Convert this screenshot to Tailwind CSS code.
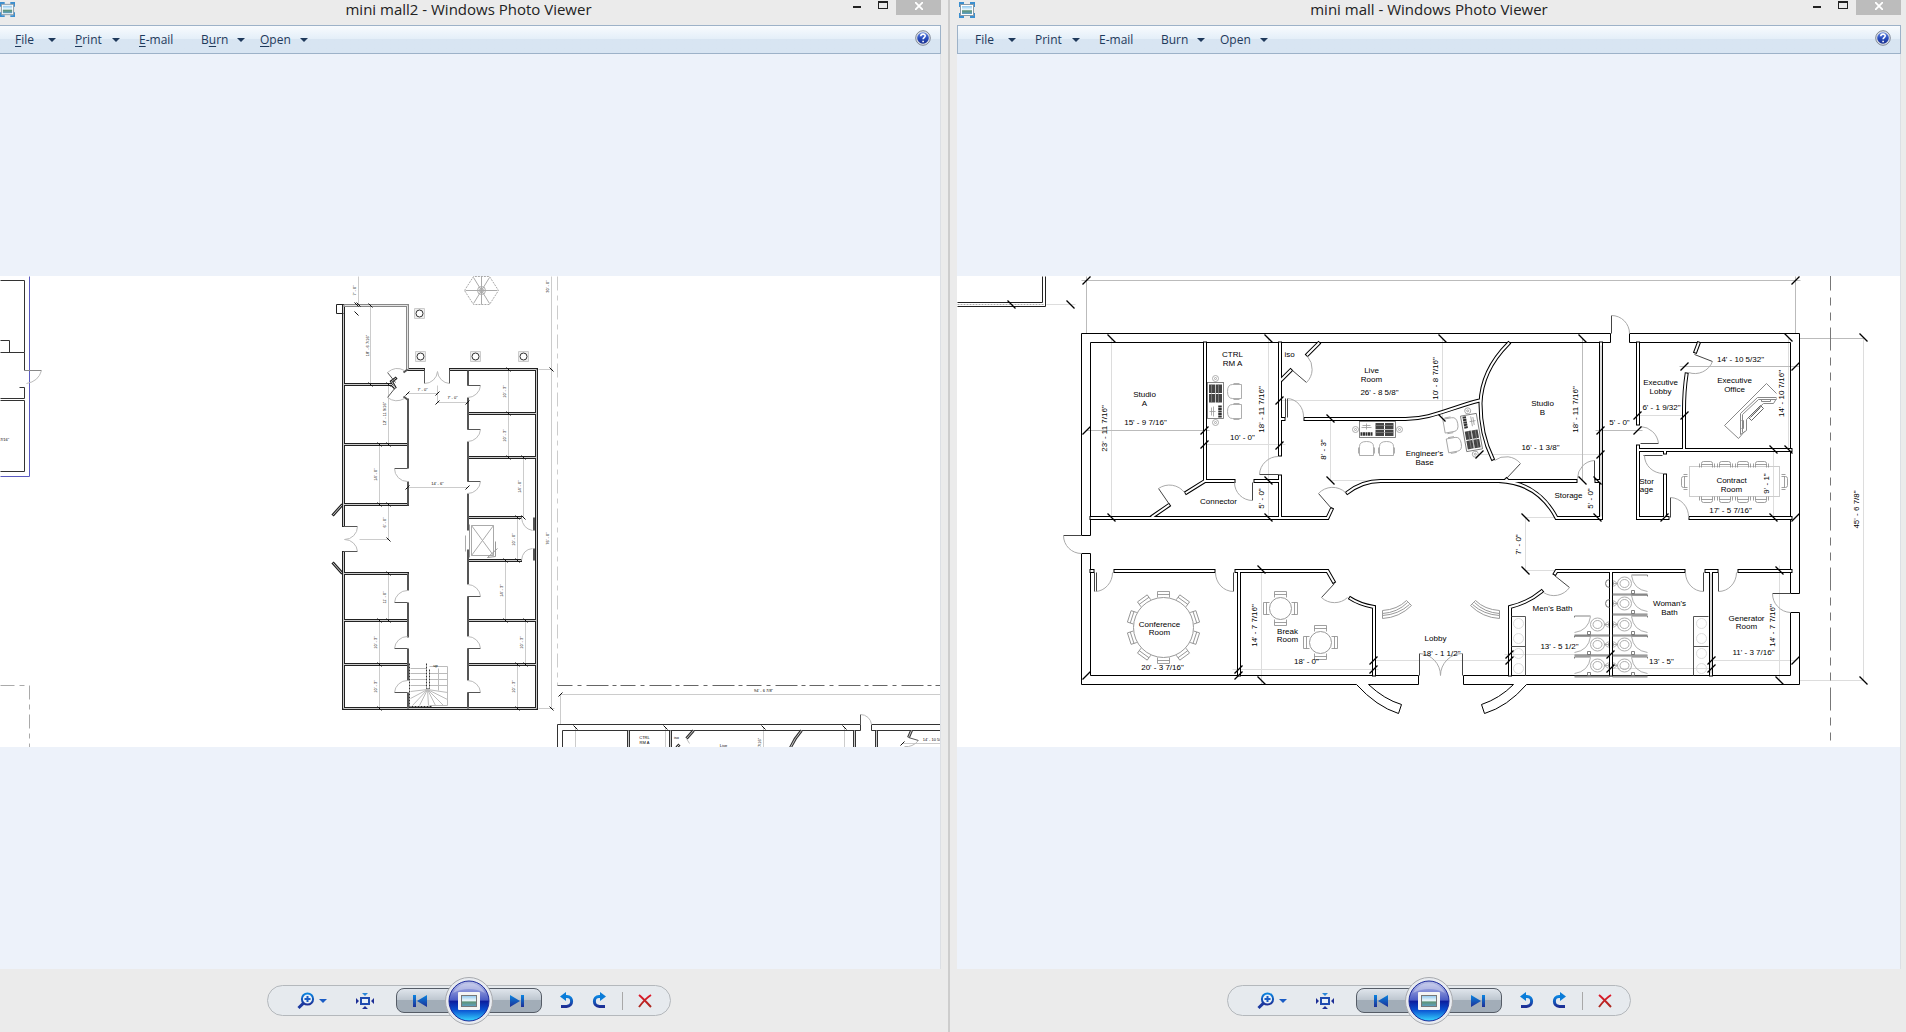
<!DOCTYPE html>
<html lang="en">
<head>
  <meta charset="UTF-8">
  <title>Windows Photo Viewer</title>
  <script src="https://cdn.jsdelivr.net/npm/@tailwindcss/browser@4"></script>
</head>
<body class="bg-[#ebebeb] text-[#1e395b] font-['Open_Sans','Noto_Sans',sans-serif]">

  <!-- shared icons and furniture -->
  <svg class="absolute w-0 h-0" aria-hidden="true">
    <defs>
      <linearGradient id="sky" x1="0" y1="0" x2="0" y2="1">
        <stop offset="0" stop-color="#8cc6ee"/><stop offset=".45" stop-color="#eaf6fb"/>
        <stop offset=".6" stop-color="#5f9478"/><stop offset="1" stop-color="#5fa0c8"/>
      </linearGradient>
      <linearGradient id="blue" x1="0" y1="0" x2="0" y2="1">
        <stop offset="0" stop-color="#0a84e0"/><stop offset="1" stop-color="#1d2f96"/>
      </linearGradient>
      <linearGradient id="red" x1="0" y1="0" x2="0" y2="1">
        <stop offset="0" stop-color="#e0182a"/><stop offset="1" stop-color="#a82a20"/>
      </linearGradient>
      <linearGradient id="ball" x1="0" y1="0" x2="0" y2="1">
        <stop offset="0" stop-color="#b9bfe6"/><stop offset=".2" stop-color="#8f99da"/><stop offset=".48" stop-color="#4a5bc4"/>
        <stop offset=".5" stop-color="#0c1c9c"/><stop offset=".72" stop-color="#0a4fd0"/><stop offset="1" stop-color="#35d6ff"/>
      </linearGradient>
      <linearGradient id="help" x1="0" y1="0" x2="0" y2="1">
        <stop offset="0" stop-color="#6f8fe0"/><stop offset=".5" stop-color="#2a4fc0"/><stop offset="1" stop-color="#1a2f8c"/>
      </linearGradient>
    </defs>

    <symbol id="i-app" viewBox="0 0 16 16">
      <path d="M1 5V1H5M11 1H15V5M15 11V15H11M5 15H1V11" fill="none" stroke="#3b8fd0" stroke-width="2"/>
      <rect x="1.500" y="2.500" width="13" height="11" fill="#fff" stroke="#8a9aa6"/>
      <rect x="3" y="4" width="10" height="8" fill="url(#sky)"/>
    </symbol>
    <symbol id="i-help" viewBox="0 0 16 16">
      <circle cx="8" cy="8" r="7.300" fill="#dfe3ea" stroke="#7f8794"/>
      <circle cx="8" cy="8" r="5.800" fill="url(#help)"/>
      <path d="M5.800 6.300C5.800 3.400 10.400 3.500 10.200 6C10.100 7.600 8.200 7.700 8.100 9.300M8.100 10.700V12.200" fill="none" stroke="#fff" stroke-width="1.600"/>
    </symbol>
    <symbol id="i-zoom" viewBox="0 0 18 18">
      <circle cx="10.500" cy="7" r="5.600" fill="#e8f1f8" stroke="url(#blue)" stroke-width="2"/>
      <path d="M6.500 11.200L1.500 16" stroke="#1d3aa0" stroke-width="3"/>
      <path d="M10.500 4V10M7.500 7H13.500" stroke="#1a5cc4" stroke-width="2"/>
    </symbol>
    <symbol id="i-fit" viewBox="0 0 18 16">
      <rect x="5" y="5" width="8" height="6" fill="#e8f1f8" stroke="#1f4bb0" stroke-width="2"/>
      <path d="M6 0H12L9 3Z" fill="#2a86d8"/>
      <path d="M6 16H12L9 13ZM0 5V11L3 8ZM18 5V11L15 8Z" fill="#1d2f96"/>
    </symbol>
    <symbol id="i-prev" viewBox="0 0 14 12">
      <path d="M0 0H3V12H0ZM14 0V12L4 6Z" fill="url(#blue)"/>
    </symbol>
    <symbol id="i-undo" viewBox="0 0 14 17">
      <path d="M4 4.500H7C13 4.500 13.500 14 6.500 14.500H1" fill="none" stroke="url(#blue)" stroke-width="3"/>
      <path d="M0 4.500L6 0V9Z" fill="#0a7cd8"/>
    </symbol>
    <symbol id="i-del" viewBox="0 0 14 14">
      <path d="M1 1C5 4 9 9 13 13M13 1C8 4 4 9 1 13" fill="none" stroke="url(#red)" stroke-width="2"/>
    </symbol>

    <symbol id="console" viewBox="-26 -10 52 40" overflow="visible">
      <g fill="#fff" stroke="#999" stroke-width=".8">
        <rect x="-18" y="-8" width="36" height="16" stroke="#666"/>
        <circle cx="-22" cy="0" r="3"/><circle cx="-22" cy="0" r="1"/>
        <circle cx="22" cy="0" r="3"/><circle cx="22" cy="0" r="1"/>
        <path d="M-16 -2H-6M-15 -4H-7M-11 -6V0"/>
        <path d="M-18 26V17Q-18 12 -11 12Q-4 12 -4 17V26H-18ZM-19 18V24M-3 18V24"/>
        <path d="M2 26V17Q2 12 9 12Q16 12 16 17V26H2ZM1 18V24M17 18V24"/>
      </g>
      <path d="M-17 4.500H-5" stroke="#333" stroke-width="3.500" stroke-dasharray="2 .5"/>
      <path d="M-2 -3.500H16M-2 3.500H16" stroke="#444" stroke-width="6" stroke-dasharray="8.500 1"/>
      <path d="M-2 -4H16M-2 0H16M-2 3H16" stroke="#999" stroke-width=".6"/>
    </symbol>
    <symbol id="wc" viewBox="0 0 37 21" overflow="visible">
      <g fill="none" stroke="#999" stroke-width=".8">
        <ellipse cx="12" cy="10" rx="7" ry="6.500"/><ellipse cx="12" cy="10" rx="4.500" ry="4"/>
        <path d="M1 7L5 10L1 13M1 10H5M1 8V12"/>
        <path d="M19 2Q21 16 35 18"/>
        <path d="M0 20.500H35M0 21.500H35M19 1.500H35V3M19 17H22V20H19Z" stroke="#666"/>
      </g>
    </symbol>
    <symbol id="chair" viewBox="0 0 12 7" overflow="visible">
      <path d="M0 6V0H12V6M0 3H12" fill="none" stroke="#888" stroke-width=".8"/>
    </symbol>
    <symbol id="seat" viewBox="0 0 15 6" overflow="visible">
      <path d="M2 6V2Q2 0 4 0H11Q13 0 13 2V6M0 2V6M15 2V6M2 3H13" fill="none" stroke="#888" stroke-width=".8"/>
    </symbol>
  </svg>

  <div class="grid grid-cols-[950fr_956fr] min-h-screen">

    <!-- mini mall2 -->
    <section class="flex flex-col pr-[7px] border-r-2 border-[#cdcdcd] min-w-0">
      <header class="relative flex justify-center h-[25px] text-[#222]">
        <svg class="absolute left-0 top-0.5 w-[15px] h-[15px]"><use href="#i-app"/></svg>
        <h1 class="text-[15px] leading-[18px] pr-1 whitespace-nowrap">mini mall2 - Windows Photo Viewer</h1>
        <div class="absolute right-0 top-0 flex h-[15px]">
          <button aria-label="Minimize" class="flex items-start w-6 pl-[9px] pt-1.5"><span class="h-0.5 w-2 bg-[#222]"></span></button>
          <button aria-label="Maximize" class="flex items-start w-7 pl-[10px] pt-px"><span class="h-2 w-[10px] border border-t-2 border-[#222]"></span></button>
          <button aria-label="Close" class="w-[45px] bg-[#bcbcbc] flex justify-center pt-0.5">
            <svg class="w-2 h-2" viewBox="0 0 8 8"><path d="M0 0L8 8M8 0L0 8" stroke="#fff" stroke-width="1.800"/></svg>
          </button>
        </div>
      </header>
      <nav class="flex items-center h-[29px] pl-[15px] pr-[9px] text-xs border border-l-0 border-[#9db2c8] bg-linear-to-b from-[#f8fbfe] from-0% via-[#e3eef8] via-50% to-[#d8e5f2] to-50%">
        <button class="flex items-center justify-between w-[41px]"><span><u class="underline-offset-2">F</u>ile</span><span class="size-0 border-x-4 border-t-4 border-x-transparent border-t-[#1e395b]"></span></button>
        <button class="flex items-center justify-between w-[45px] ml-[19px]"><span><u class="underline-offset-2">P</u>rint</span><span class="size-0 border-x-4 border-t-4 border-x-transparent border-t-[#1e395b]"></span></button>
        <button class="w-11 ml-[19px] text-left whitespace-nowrap"><u class="underline-offset-2">E</u>-mail</button>
        <button class="flex items-center justify-between w-11 ml-[18px]"><span>B<u class="underline-offset-2">u</u>rn</span><span class="size-0 border-x-4 border-t-4 border-x-transparent border-t-[#1e395b]"></span></button>
        <button class="flex items-center justify-between w-12 ml-[15px]"><span><u class="underline-offset-2">O</u>pen</span><span class="size-0 border-x-4 border-t-4 border-x-transparent border-t-[#1e395b]"></span></button>
        <button aria-label="Help" class="ml-auto pb-1"><svg class="size-4"><use href="#i-help"/></svg></button>
      </nav>
      <main class="flex-1 flex flex-col justify-center bg-[#edf2fa] border-r border-[#dcdfe4]">
        <svg class="w-full h-[471px] bg-white font-['Liberation_Sans',sans-serif]" viewBox="-0.500 275.500 940 471" role="img" aria-label="mini mall2 floor plan">
          <!-- dimension lines -->
          <g fill="none" stroke="#ccc">
            <path d="M370 305V384M388 384V444M379 444V505M407 393H437M437 385V402M437 402H467M508 369V457M523 457V517M407 487H467M359 539H388M388 504V539M388 573V620M379 620V708M517 517V560M505 560V620M525 620V664M517 664V708M551 276V708M538 369H552M538 708H554M358 276V305"/>
            <path d="M560 694H941M560 694V724M575 727V747M665 727V747M763 727V747M844 727V747M902 743H941"/>
          </g>
          <path d="M557 276V685" stroke="#ccc" fill="none" stroke-dasharray="14 5 5 5"/>
          <path d="M557 685H941" stroke="#666" fill="none" stroke-dasharray="15 5 4 5 22 4 4 4"/>
          <path d="M0 685H29V747" stroke="#aaa" fill="none" stroke-dasharray="14 5 5 5"/>

          <!-- neighbouring block at the left edge -->
          <path d="M29 276V476H0" stroke="#5a5ac0" fill="none"/>
          <path d="M0 280H24V352H0M24 387V398H0M0 400H24V471H0M9 340V352M24 352V370M0 340H9M19 387H24" stroke="#333" fill="none"/>
          <path d="M24 370H41" stroke="#888" fill="none"/>
          <path d="M41 370Q38 381 26 383" stroke="#bbb" fill="none"/>

          <!-- walls -->
          <g fill="none" stroke="#222" stroke-width="3" stroke-linecap="square">
            <path d="M343 305V525M343 552V708H536V369H450M423 369H408M344 384H391M344 444H406M344 504H407M344 573H407M344 620H406M344 664H406M468 413H535M468 457H535M468 517H520M468 560H520M468 620H535M468 664H535M341 505L333 514M341 572L333 563M391 384L395 388L391 381L395 378"/>
            <path d="M343 305V525M343 552V708H536V369H450M423 369H408M344 384H391M344 444H406M344 504H407M344 573H407M344 620H406M344 664H406M468 413H535M468 457H535M468 517H520M468 560H520M468 620H535M468 664H535M341 505L333 514M341 572L333 563M391 384L395 388L391 381L395 378" stroke="#ccc" stroke-width="1"/>
          </g>
          <path d="M343 305H407V369" stroke="#888" stroke-width="3" fill="none"/>
          <path d="M344 305H407V369" stroke="#e4e4e4" stroke-width="1" fill="none"/>
          <path d="M343 304H336V313H343" stroke="#222" fill="none"/>
          <g fill="none" stroke="#555" stroke-width="2">
            <path d="M407.500 398V468M407.500 481V505M407.500 573V590M407.500 602V637M407.500 648V680M407.500 692V708M403 372L407 369M403 396L407 399"/>
            <path d="M467.500 370V385M467.500 397V429M467.500 441V481M467.500 493V530M467.500 549V584M467.500 596V636M467.500 648V680M467.500 692V708M533.500 517V530M533.500 548V560"/>
          </g>

          <!-- doors -->
          <path d="M394 468H407M394 602H407M394 648H407M394 692H407M467 385H480M467 429H480M467 481H480M467 596H480M467 648H480M467 692H480M343 526H357M343 551H357M424 369V383M449 369V383M395 382L387 372M395 387L387 397" stroke="#555" fill="none"/>
          <g fill="none" stroke="#bbb">
            <path d="M394 468A13 13 0 0 0 407 481M394 602A13 13 0 0 1 407 590M394 648A13 13 0 0 1 407 636M394 692A13 13 0 0 1 407 680"/>
            <path d="M480 385A13 13 0 0 1 467 397M480 429A13 13 0 0 1 467 441M480 481A13 13 0 0 1 467 493M480 596A13 13 0 0 0 467 584M480 648A13 13 0 0 0 467 636M480 692A13 13 0 0 0 467 680"/>
            <path d="M357 526A13 13 0 0 1 344 539A13 13 0 0 1 357 551M424 383A13 13 0 0 0 437 371A13 13 0 0 0 449 383M387 372Q395 365 404 370M387 397Q395 403 404 398M521 517Q522 528 532 530M521 560Q522 549 532 548"/>
          </g>

          <!-- umbrella table and columns -->
          <g fill="none" stroke="#aaa">
            <path d="M464 290L473 276H489L498 290L489 304H473Z" stroke-dasharray="2 1"/>
            <path d="M465 290H497M473 277L489 303M489 277L473 303M481 276V304"/>
            <circle cx="481" cy="290" r="4"/><circle cx="481" cy="290" r="2"/>
          </g>
          <path d="M414 308H424V318H414ZM415 351H425V361H415ZM470 351H480V361H470ZM518 351H528V361H518Z" fill="#eee" stroke="#ccc"/>
          <g fill="#fff" stroke="#333">
            <circle cx="419" cy="313" r="3.500"/><circle cx="420" cy="356" r="3.500"/><circle cx="475" cy="356" r="3.500"/><circle cx="523" cy="356" r="3.500"/>
          </g>

          <!-- lift and stairs -->
          <path d="M471 525H493V555H471ZM471 525L493 555M493 525L471 555M465 535V551" fill="none" stroke="#aaa"/>
          <path d="M469 524V557M495 541V556L487 557L497 548" fill="none" stroke="#999"/>
          <path d="M429 666H447V705H429M429 673H447M429 679H447M429 685H447M438 668V690M427 689L447 692M427 689L447 699M427 689L443 705M427 689L435 705M427 689L428 705M427 689L419 705M427 689L412 705M427 689L410 698M427 689L410 691M410 685H426M410 679H426M410 673H426M410 668H426" fill="none" stroke="#bbb"/>
          <path d="M409 663V706H431M426 663V688H429V668" fill="none" stroke="#333" stroke-dasharray="2 1"/>

          <!-- block at the bottom -->
          <path d="M557 747V724H860V730H562V747M941 724H871V730H941" fill="none" stroke="#333"/>
          <g fill="none" stroke="#333" stroke-width="3">
            <path d="M628 730V747M670 730V747M854 730V747M876 730V747M693 730L686 738M679 744L676 747M801 730Q794 738 790 747M911 730L908 737"/>
            <path d="M628 730V747M670 730V747M854 730V747M876 730V747M693 730L686 738M679 744L676 747M801 730Q794 738 790 747M911 730L908 737" stroke="#ccc" stroke-width="1"/>
          </g>
          <path d="M860 714V724M908 737L918 740" stroke="#555" fill="none"/>
          <path d="M860 714A11 11 0 0 1 871 724M686 738L689 743M918 740Q912 747 904 746" stroke="#bbb" fill="none"/>

          <!-- ticks -->
          <path d="M368 303l4 4M354 302l4 4M356 302l4 4M354 311l4 4M368 382l4 4M386 382l4 4M377 442l4 4M386 442l4 4M377 502l4 4M386 502l4 4M386 537l4 4M386 571l4 4M386 618l4 4M377 618l4 4M377 662l4 4M377 706l4 4M506 367l4 4M506 411l4 4M506 455l4 4M521 455l4 4M521 515l4 4M515 515l4 4M515 558l4 4M503 558l4 4M503 618l4 4M523 618l4 4M523 662l4 4M515 662l4 4M515 706l4 4M549 367l4 4M549 706l4 4M405 395l4-4M435 395l4-4M435 404l4-4M465 404l4-4M405 489l4-4M465 489l4-4M558 696l4-4M573 725l4 4M663 725l4 4M761 725l4 4M842 725l4 4M900 745l4-4" stroke="#111" fill="none"/>

          <g font-size="4" text-anchor="middle" fill="#000">
            <text x="422" y="390">7' - 0"</text>
            <text x="452" y="398">7' - 0"</text>
            <text x="437" y="484">14' - 6"</text>
            <text x="763" y="691">94' - 6 7/8"</text>
            <text x="644" y="738">CTRL</text>
            <text x="644" y="743">RM A</text>
            <text x="676" y="738">iso</text>
            <text x="723" y="746">Live</text>
            <text x="934" y="740">14' - 10 5/32"</text>
            <text x="435" y="666">up</text>
            <text x="4" y="440">7/16"</text>
            <text transform="translate(355 290) rotate(-90)">7' - 0"</text>
            <text transform="translate(548 286) rotate(-90)">30' - 0"</text>
            <text transform="translate(548 538) rotate(-90)">76' - 0"</text>
            <text transform="translate(368 345) rotate(-90)">18' - 6 7/16"</text>
            <text transform="translate(385 413) rotate(-90)">12' - 11 9/16"</text>
            <text transform="translate(376 474) rotate(-90)">14' - 0"</text>
            <text transform="translate(385 522) rotate(-90)">6' - 0"</text>
            <text transform="translate(385 597) rotate(-90)">11' - 0"</text>
            <text transform="translate(376 642) rotate(-90)">10' - 3"</text>
            <text transform="translate(376 686) rotate(-90)">10' - 3"</text>
            <text transform="translate(505 391) rotate(-90)">10' - 3"</text>
            <text transform="translate(505 435) rotate(-90)">10' - 3"</text>
            <text transform="translate(520 486) rotate(-90)">14' - 0"</text>
            <text transform="translate(514 539) rotate(-90)">10' - 0"</text>
            <text transform="translate(502 590) rotate(-90)">14' - 3"</text>
            <text transform="translate(522 642) rotate(-90)">10' - 3"</text>
            <text transform="translate(514 686) rotate(-90)">10' - 3"</text>
            <text transform="translate(760 742) rotate(-90)">7/16"</text>
          </g>
        </svg>
      </main>
      <footer class="flex items-center justify-center h-[63px] pr-1">
        <div class="relative flex items-center w-[404px] h-[31px] rounded-full border border-[#b4b8bc] bg-[#e6eaee]">
          <button aria-label="Change the display size" class="flex items-center gap-1 ml-[29px]"><svg class="size-[18px]"><use href="#i-zoom"/></svg><span class="size-0 border-x-4 border-t-4 border-x-transparent border-t-[#1a5cc4]"></span></button>
          <button aria-label="Actual size" class="ml-[29px]"><svg class="w-[18px] h-4"><use href="#i-fit"/></svg></button>
          <button aria-label="Previous" class="flex items-center justify-center w-[73px] h-[25px] pr-6 ml-[22px] rounded-l-lg border border-[#555c66] bg-linear-to-b from-[#dfe5ec] from-0% via-[#bcc5ce] via-50% to-[#a2adb8] to-50%"><svg class="w-3.5 h-3"><use href="#i-prev"/></svg></button>
          <button aria-label="Next" class="flex items-center justify-center w-[73px] h-[25px] pl-6 rounded-r-lg border border-[#555c66] bg-linear-to-b from-[#dfe5ec] from-0% via-[#bcc5ce] via-50% to-[#a2adb8] to-50%"><svg class="w-3.5 h-3 -scale-x-100"><use href="#i-prev"/></svg></button>
          <button aria-label="Rotate counterclockwise" class="ml-[18px]"><svg class="w-3.5 h-[17px]"><use href="#i-undo"/></svg></button>
          <button aria-label="Rotate clockwise" class="ml-[18px]"><svg class="w-3.5 h-[17px] -scale-x-100"><use href="#i-undo"/></svg></button>
          <span class="w-px h-[18px] ml-4 bg-[#a8a8a8]"></span>
          <button aria-label="Delete" class="ml-[15px]"><svg class="size-3.5"><use href="#i-del"/></svg></button>
          <button aria-label="Play slide show" class="absolute left-1/2 top-1/2 -translate-1/2">
            <svg class="size-12" viewBox="0 0 48 48">
              <circle cx="24" cy="24" r="23.500" fill="#e8ebf0" stroke="#a8aaae"/>
              <circle cx="24" cy="24" r="20" fill="url(#ball)" stroke="#1c2a9c"/>
              <path d="M8 16A18 18 0 0 1 40 16Q24 8 8 16Z" fill="#fff" fill-opacity=".3"/>
              <rect x="13" y="15" width="22" height="18" rx="1" fill="#f4f4f4"/>
              <rect x="16.500" y="18.500" width="15" height="11" fill="url(#sky)" stroke="#777"/>
            </svg>
          </button>
        </div>
      </footer>
    </section>

    <!-- mini mall -->
    <section class="flex flex-col pl-[7px] pr-[5px] min-w-0">
      <header class="relative flex justify-center h-[25px] text-[#222]">
        <svg class="absolute left-0.5 top-0.5 size-4"><use href="#i-app"/></svg>
        <h1 class="text-[15px] leading-[18px] whitespace-nowrap">mini mall - Windows Photo Viewer</h1>
        <div class="absolute right-0 top-0 flex h-[15px]">
          <button aria-label="Minimize" class="flex items-start w-6 pl-[9px] pt-1.5"><span class="h-0.5 w-2 bg-[#222]"></span></button>
          <button aria-label="Maximize" class="flex items-start w-7 pl-[10px] pt-px"><span class="h-2 w-[10px] border border-t-2 border-[#222]"></span></button>
          <button aria-label="Close" class="w-[45px] bg-[#bcbcbc] flex justify-center pt-0.5">
            <svg class="w-2 h-2" viewBox="0 0 8 8"><path d="M0 0L8 8M8 0L0 8" stroke="#fff" stroke-width="1.800"/></svg>
          </button>
        </div>
      </header>
      <nav class="flex items-center h-[29px] pl-[17px] pr-[9px] text-xs border border-[#9db2c8] bg-linear-to-b from-[#f8fbfe] from-0% via-[#e3eef8] via-50% to-[#d8e5f2] to-50%">
        <button class="flex items-center justify-between w-[41px]">File<span class="size-0 border-x-4 border-t-4 border-x-transparent border-t-[#1e395b]"></span></button>
        <button class="flex items-center justify-between w-[45px] ml-[19px]">Print<span class="size-0 border-x-4 border-t-4 border-x-transparent border-t-[#1e395b]"></span></button>
        <button class="w-11 ml-[19px] text-left whitespace-nowrap">E-mail</button>
        <button class="flex items-center justify-between w-11 ml-[18px]">Burn<span class="size-0 border-x-4 border-t-4 border-x-transparent border-t-[#1e395b]"></span></button>
        <button class="flex items-center justify-between w-12 ml-[15px]">Open<span class="size-0 border-x-4 border-t-4 border-x-transparent border-t-[#1e395b]"></span></button>
        <button aria-label="Help" class="ml-auto pb-1"><svg class="size-4"><use href="#i-help"/></svg></button>
      </nav>
      <main class="flex-1 flex flex-col justify-center bg-[#edf2fa] border-r border-[#dcdfe4]">
        <svg class="w-full h-[471px] bg-white font-['Liberation_Sans',sans-serif]" viewBox="956.500 275.500 943 471" role="img" aria-label="mini mall floor plan">
          <!-- dimension lines -->
          <g fill="none" stroke="#ddd">
            <path d="M1111 338V517M1268 338V517M1204 444H1285M1442 338V418M1279 400H1479M1330 418V480H1380M1480 454H1600M1637 415H1684M1788 338V449M1863 337V680H1799M1261 569V684M1232 669H1378M1373 660H1509M1504 654H1610M1610 668H1711M1711 660H1795M1779 565V680M1525 517V570M1525 517H1555M1525 570H1555M1773 449V517M1046 304H1075"/>
            <path d="M1086 276V333M1081 280H1800M1795 276V333M1086 430H1209M1582 338V480M1595 430H1642M1679 366H1799M1799 338H1863" stroke="#bbb"/>
          </g>
          <path d="M1830 267V743" fill="none" stroke="#777" stroke-dasharray="23 7 8 7 8 7"/>

          <!-- neighbouring block -->
          <path d="M957 302H1042V276M957 306H1045V276" fill="none" stroke="#222"/>
          <path d="M957 304H1043" fill="none" stroke="#aaa" stroke-dasharray="2 1"/>

          <!-- outer walls -->
          <g fill="none" stroke="#000">
            <path d="M1090 535H1081V333H1610V342H1090V535M1629 333H1799V593H1790V342H1629ZM1081 553H1090V675H1418V684H1368M1356 684H1081V553M1799 612V684H1526M1513 684H1463V675H1790V612H1799"/>
            <path d="M1356 684Q1376 706 1398 713L1401 704Q1384 699 1368 684M1526 684Q1507 706 1484 713L1481 704Q1499 698 1513 684"/>
          </g>

          <!-- inner walls -->
          <g fill="none" stroke="#000" stroke-width="4" stroke-linecap="square">
            <path d="M1204.500 343V480.500H1233M1255 480.500H1278M1279.500 343V454M1279.500 476V517M1204.500 480.500L1186 492M1168 505L1152 516M1091 517.500H1327L1331 509M1318 343L1307 354M1290 370L1281 379M1281 418.500H1283M1305 418.500H1405C1430 418.500 1448 408 1479 400M1508 343Q1481 370 1480 403Q1480 434 1492 458M1347 492Q1362 480.500 1380 480.500H1575M1500 480.500C1530 482 1547 500 1556 517.500H1600M1506 479L1507 480M1600.500 343V517.500M1596 480.500H1600M1637.500 343V423M1637.500 446V517.500H1667M1638 449.500H1790M1690 517.500H1790M1664.500 450V452M1664.500 475V517M1698 343L1695 351M1686 374Q1683.500 390 1683.500 410V449
              M1091 570.500H1092M1115 570.500H1213M1236 570.500H1327L1333 581M1238.500 571V674M1350 598Q1359 604 1373.500 606.500V674M1509.500 674V606.500Q1528 602 1541 591M1554.500 573L1556 570.500H1683M1706 570.500H1716M1739 570.500H1790M1610.500 571V674M1710.500 571V674"/>
            <path d="M1204.500 343V480.500H1233M1255 480.500H1278M1279.500 343V454M1279.500 476V517M1204.500 480.500L1186 492M1168 505L1152 516M1091 517.500H1327L1331 509M1318 343L1307 354M1290 370L1281 379M1281 418.500H1283M1305 418.500H1405C1430 418.500 1448 408 1479 400M1508 343Q1481 370 1480 403Q1480 434 1492 458M1347 492Q1362 480.500 1380 480.500H1575M1500 480.500C1530 482 1547 500 1556 517.500H1600M1506 479L1507 480M1600.500 343V517.500M1596 480.500H1600M1637.500 343V423M1637.500 446V517.500H1667M1638 449.500H1790M1690 517.500H1790M1664.500 450V452M1664.500 475V517M1698 343L1695 351M1686 374Q1683.500 390 1683.500 410V449
              M1091 570.500H1092M1115 570.500H1213M1236 570.500H1327L1333 581M1238.500 571V674M1350 598Q1359 604 1373.500 606.500V674M1509.500 674V606.500Q1528 602 1541 591M1554.500 573L1556 570.500H1683M1706 570.500H1716M1739 570.500H1790M1610.500 571V674M1710.500 571V674" stroke="#fff" stroke-width="2"/>
          </g>
          <path d="M1600.500 345V516M1710.500 573V673" stroke="#bbb" stroke-width="1"/>

          <!-- door leaves and swings -->
          <path d="M1063 535H1081M1611 315V333M1772 593H1790M1419 653V675M1462 653V675M1292 370L1306 382M1285 398V417M1287 398V417M1506 478L1520 463M1594 460V480M1259 474H1278M1252 482V500M1169 504L1158 488M1331 508L1318 493M1643 455H1662M1670 497V517M1694 354L1712 361M1640 443H1658M1094 572V591M1096 572V591M1233 572V591M1334 583L1321 597M1703 572V591M1718 572V591M1554 575L1569 587" fill="none" stroke="#444"/>
          <path d="M1063 535A18 18 0 0 0 1081 553M1611 315A18 18 0 0 1 1629 333M1772 593A19 19 0 0 0 1790 612M1419 653A22 22 0 0 1 1440 675A22 22 0 0 1 1462 653M1306 382A19 19 0 0 0 1307 356M1287 398A17 18 0 0 1 1303 417M1520 463A19 19 0 0 0 1494 460M1594 460A18 18 0 0 0 1577 478M1259 474A19 19 0 0 1 1278 456M1252 500A18 18 0 0 1 1234 482M1158 488A19 19 0 0 1 1184 492M1318 493A19 19 0 0 1 1345 492M1644 455A19 18 0 0 0 1663 473M1670 497A19 19 0 0 1 1688 517M1712 361A19 19 0 0 1 1688 372M1658 443A19 19 0 0 0 1640 426M1095 591A18 19 0 0 0 1112 572M1233 591A18 19 0 0 1 1215 572M1321 597A19 19 0 0 0 1347 597M1703 591A18 19 0 0 1 1685 572M1718 591A18 19 0 0 0 1736 572M1569 587A19 19 0 0 1 1543 592" fill="none" stroke="#aaa"/>

          <!-- consoles -->
          <g transform="translate(1215 400) rotate(-90)"><use href="#console" x="-26" y="-10" width="52" height="40"/></g>
          <g transform="translate(1377 429)"><use href="#console" x="-26" y="-10" width="52" height="40"/></g>
          <g transform="translate(1471 432) rotate(80)"><use href="#console" x="-26" y="-10" width="52" height="40"/></g>

          <!-- executive desk -->
          <path d="M1744 431L1738 438L1724 425L1766 383L1776 393M1740 434V413L1757 397H1776M1742 432V414L1758 399H1776M1740 434L1746 430V419L1763 403H1773L1776 398M1741 420H1743V428H1741M1761 399V401H1770V399" fill="none" stroke="#888"/>
          <path d="M1748 417L1760 405L1763 408L1751 420ZM1750 417L1760 407" fill="none" stroke="#666"/>

          <!-- contract table -->
          <rect x="1689" y="466" width="90" height="30" fill="none" stroke="#ccc"/>
          <g>
            <use href="#seat" x="1699" y="461" width="15" height="6"/><use href="#seat" x="1717" y="461" width="15" height="6"/>
            <use href="#seat" x="1735" y="461" width="15" height="6"/><use href="#seat" x="1753" y="461" width="15" height="6"/>
          </g>
          <g transform="translate(0 963) scale(1 -1)">
            <use href="#seat" x="1699" y="461" width="15" height="6"/><use href="#seat" x="1717" y="461" width="15" height="6"/>
            <use href="#seat" x="1735" y="461" width="15" height="6"/><use href="#seat" x="1753" y="461" width="15" height="6"/>
          </g>
          <g transform="translate(1681 489) rotate(-90)"><use href="#seat" width="15" height="6"/></g>
          <g transform="translate(1787 474) rotate(90)"><use href="#seat" width="15" height="6"/></g>

          <!-- conference table -->
          <circle cx="1163" cy="627" r="30" fill="none" stroke="#999"/>
          <g id="conf" transform="translate(1163 627)"></g>

          <!-- break tables -->
          <circle cx="1280" cy="608" r="11" fill="none" stroke="#999"/>
          <circle cx="1320" cy="642" r="11" fill="none" stroke="#999"/>
          <g id="brk1" transform="translate(1280 608)"></g>
          <g id="brk2" transform="translate(1320 642)"></g>

          <!-- lobby benches -->
          <path id="bench" d="M1382 618V610Q1397 609 1406 600L1411 605Q1399 617 1382 618M1382 613Q1397 612 1407 602M1382 615Q1398 614 1409 604" fill="none" stroke="#999"/>
          <use href="#bench" transform="translate(2881 0) scale(-1 1)"/>

          <!-- bath counters -->
          <path d="M1511 616H1525V675M1511 646H1525M1708 616H1693V675M1693 646H1708" fill="none" stroke="#555"/>
          <g fill="none" stroke="#ddd">
            <circle cx="1518" cy="623" r="5"/><circle cx="1518" cy="638" r="5"/><circle cx="1518" cy="653" r="5"/><circle cx="1518" cy="668" r="5"/>
            <circle cx="1701" cy="623" r="5"/><circle cx="1701" cy="638" r="5"/><circle cx="1701" cy="653" r="5"/><circle cx="1701" cy="668" r="5"/>
          </g>
          <path d="M1609 579A4 4 0 0 0 1609 587M1609 599A4 4 0 0 0 1609 607" fill="none" stroke="#777"/>
          <use href="#wc" x="1612" y="573" width="37" height="21"/>
          <use href="#wc" x="1612" y="593" width="37" height="21"/>
          <use href="#wc" x="1612" y="614" width="37" height="21"/>
          <use href="#wc" x="1612" y="634" width="37" height="21"/>
          <use href="#wc" x="1612" y="655" width="37" height="21"/>
          <g transform="translate(3221 0) scale(-1 1)">
            <use href="#wc" x="1612" y="614" width="37" height="21"/>
            <use href="#wc" x="1612" y="634" width="37" height="21"/>
            <use href="#wc" x="1612" y="655" width="37" height="21"/>
          </g>

          <!-- ticks -->
          <g fill="none" stroke="#000" stroke-width="1.300">
            <path d="M1107 334l8 8M1264 334l8 8M1107 513l8 8M1264 513l8 8M1264 476l8 8M1066 300l8 8M1007 300l8 8M1438 334l8 8M1578 334l8 8M1326 414l8 8M1326 476l8 8M1438 414l7 7M1578 476l8 8M1593 476l8 8M1521 513l8 8M1593 513l8 8M1784 333l8 8M1859 333l8 8M1769 445l8 8M1784 445l8 8M1769 513l8 8M1257 565l8 8M1257 676l8 8M1521 566l8 8M1775 566l8 8M1775 676l8 8M1859 676l8 8"/>
            <path d="M1082 284l8-8M1791 284l8-8M1275 404l8-8M1275 449l8-8M1200 434l8-8M1200 448l8-8M1082 434l8-8M1596 434l8-8M1596 458l8-8M1475 458l8-8M1791 370l8-8M1680 370l8-8M1680 419l8-8M1633 419l8-8M1633 434l8-8M1660 521l8-8M1791 521l8-8M1082 679l8-8M1234 673l8-8M1234 679l8-8M1369 664l8-8M1369 673l8-8M1505 658l8-8M1505 664l8-8M1606 658l8-8M1606 672l8-8M1707 664l8-8M1707 672l8-8M1791 664l8-8"/>
          </g>

          <g font-size="8" text-anchor="middle" fill="#000">
            <text x="1144" y="396">Studio</text><text x="1144" y="405">A</text>
            <text x="1145" y="424">15' - 9 7/16"</text>
            <text x="1232" y="356">CTRL</text><text x="1232" y="365">RM A</text>
            <text x="1242" y="439">10' - 0"</text>
            <text x="1289" y="356">iso</text>
            <text x="1218" y="503">Connector</text>
            <text x="1371" y="372">Live</text><text x="1371" y="381">Room</text>
            <text x="1379" y="394">26' - 8 5/8"</text>
            <text x="1424" y="455">Engineer's</text><text x="1424" y="464">Base</text>
            <text x="1542" y="405">Studio</text><text x="1542" y="414">B</text>
            <text x="1540" y="449">16' - 1 3/8"</text>
            <text x="1568" y="497">Storage</text>
            <text x="1619" y="424">5' - 0"</text>
            <text x="1660" y="384">Executive</text><text x="1660" y="393">Lobby</text>
            <text x="1661" y="409">6' - 1 9/32"</text>
            <text x="1740" y="361">14' - 10 5/32"</text>
            <text x="1734" y="382">Executive</text><text x="1734" y="391">Office</text>
            <text x="1646" y="483">Stor</text><text x="1646" y="491">age</text>
            <text x="1731" y="482">Contract</text><text x="1731" y="491">Room</text>
            <text x="1730" y="512">17' - 5 7/16"</text>
            <text x="1159" y="626">Conference</text><text x="1159" y="634">Room</text>
            <text x="1162" y="669">20' - 3 7/16"</text>
            <text x="1287" y="633">Break</text><text x="1287" y="641">Room</text>
            <text x="1306" y="663">18' - 0"</text>
            <text x="1435" y="640">Lobby</text>
            <text x="1441" y="655">18' - 1 1/2"</text>
            <text x="1552" y="610">Men's Bath</text>
            <text x="1559" y="648">13' - 5 1/2"</text>
            <text x="1669" y="605">Woman's</text><text x="1669" y="614">Bath</text>
            <text x="1661" y="663">13' - 5"</text>
            <text x="1746" y="620">Generator</text><text x="1746" y="628">Room</text>
            <text x="1753" y="654">11' - 3 7/16"</text>
            <text transform="translate(1106 428) rotate(-90)">23' - 11 7/16"</text>
            <text transform="translate(1263 409) rotate(-90)">18' - 11 7/16"</text>
            <text transform="translate(1263 498) rotate(-90)">5' - 0"</text>
            <text transform="translate(1437 378) rotate(-90)">10' - 8 7/16"</text>
            <text transform="translate(1325 449) rotate(-90)">8' - 3"</text>
            <text transform="translate(1577 409) rotate(-90)">18' - 11 7/16"</text>
            <text transform="translate(1592 498) rotate(-90)">5' - 0"</text>
            <text transform="translate(1783 393) rotate(-90)">14' - 10 7/16"</text>
            <text transform="translate(1768 483) rotate(-90)">9' - 1"</text>
            <text transform="translate(1858 509) rotate(-90)">45' - 6 7/8"</text>
            <text transform="translate(1256 625) rotate(-90)">14' - 7 7/16"</text>
            <text transform="translate(1520 544) rotate(-90)">7' - 0"</text>
            <text transform="translate(1774 625) rotate(-90)">14' - 7 7/16"</text>
          </g>
        </svg>
      </main>
      <footer class="flex items-center justify-center h-[63px]">
        <div class="relative flex items-center w-[404px] h-[31px] rounded-full border border-[#b4b8bc] bg-[#e6eaee]">
          <button aria-label="Change the display size" class="flex items-center gap-1 ml-[29px]"><svg class="size-[18px]"><use href="#i-zoom"/></svg><span class="size-0 border-x-4 border-t-4 border-x-transparent border-t-[#1a5cc4]"></span></button>
          <button aria-label="Actual size" class="ml-[29px]"><svg class="w-[18px] h-4"><use href="#i-fit"/></svg></button>
          <button aria-label="Previous" class="flex items-center justify-center w-[73px] h-[25px] pr-6 ml-[22px] rounded-l-lg border border-[#555c66] bg-linear-to-b from-[#dfe5ec] from-0% via-[#bcc5ce] via-50% to-[#a2adb8] to-50%"><svg class="w-3.5 h-3"><use href="#i-prev"/></svg></button>
          <button aria-label="Next" class="flex items-center justify-center w-[73px] h-[25px] pl-6 rounded-r-lg border border-[#555c66] bg-linear-to-b from-[#dfe5ec] from-0% via-[#bcc5ce] via-50% to-[#a2adb8] to-50%"><svg class="w-3.5 h-3 -scale-x-100"><use href="#i-prev"/></svg></button>
          <button aria-label="Rotate counterclockwise" class="ml-[18px]"><svg class="w-3.5 h-[17px]"><use href="#i-undo"/></svg></button>
          <button aria-label="Rotate clockwise" class="ml-[18px]"><svg class="w-3.5 h-[17px] -scale-x-100"><use href="#i-undo"/></svg></button>
          <span class="w-px h-[18px] ml-4 bg-[#a8a8a8]"></span>
          <button aria-label="Delete" class="ml-[15px]"><svg class="size-3.5"><use href="#i-del"/></svg></button>
          <button aria-label="Play slide show" class="absolute left-1/2 top-1/2 -translate-1/2">
            <svg class="size-12" viewBox="0 0 48 48">
              <circle cx="24" cy="24" r="23.500" fill="#e8ebf0" stroke="#a8aaae"/>
              <circle cx="24" cy="24" r="20" fill="url(#ball)" stroke="#1c2a9c"/>
              <path d="M8 16A18 18 0 0 1 40 16Q24 8 8 16Z" fill="#fff" fill-opacity=".3"/>
              <rect x="13" y="15" width="22" height="18" rx="1" fill="#f4f4f4"/>
              <rect x="16.500" y="18.500" width="15" height="11" fill="url(#sky)" stroke="#777"/>
            </svg>
          </button>
        </div>
      </footer>
    </section>
  </div>

  <script>
    // seat chairs evenly round a table
    function addChairs(id, count, radius) {
      const group = document.getElementById(id);
      for (let i = 0; i < count; i++) {
        const chair = document.createElementNS('http://www.w3.org/2000/svg', 'use');
        chair.setAttribute('href', '#chair');
        chair.setAttribute('x', -6);
        chair.setAttribute('y', -radius);
        chair.setAttribute('width', 12);
        chair.setAttribute('height', 7);
        chair.setAttribute('transform', `rotate(${i * 360 / count})`);
        group.appendChild(chair);
      }
    }

    addChairs('conf', 10, 36);
    addChairs('brk1', 4, 17);
    addChairs('brk2', 4, 17);
  </script>
</body>
</html>
